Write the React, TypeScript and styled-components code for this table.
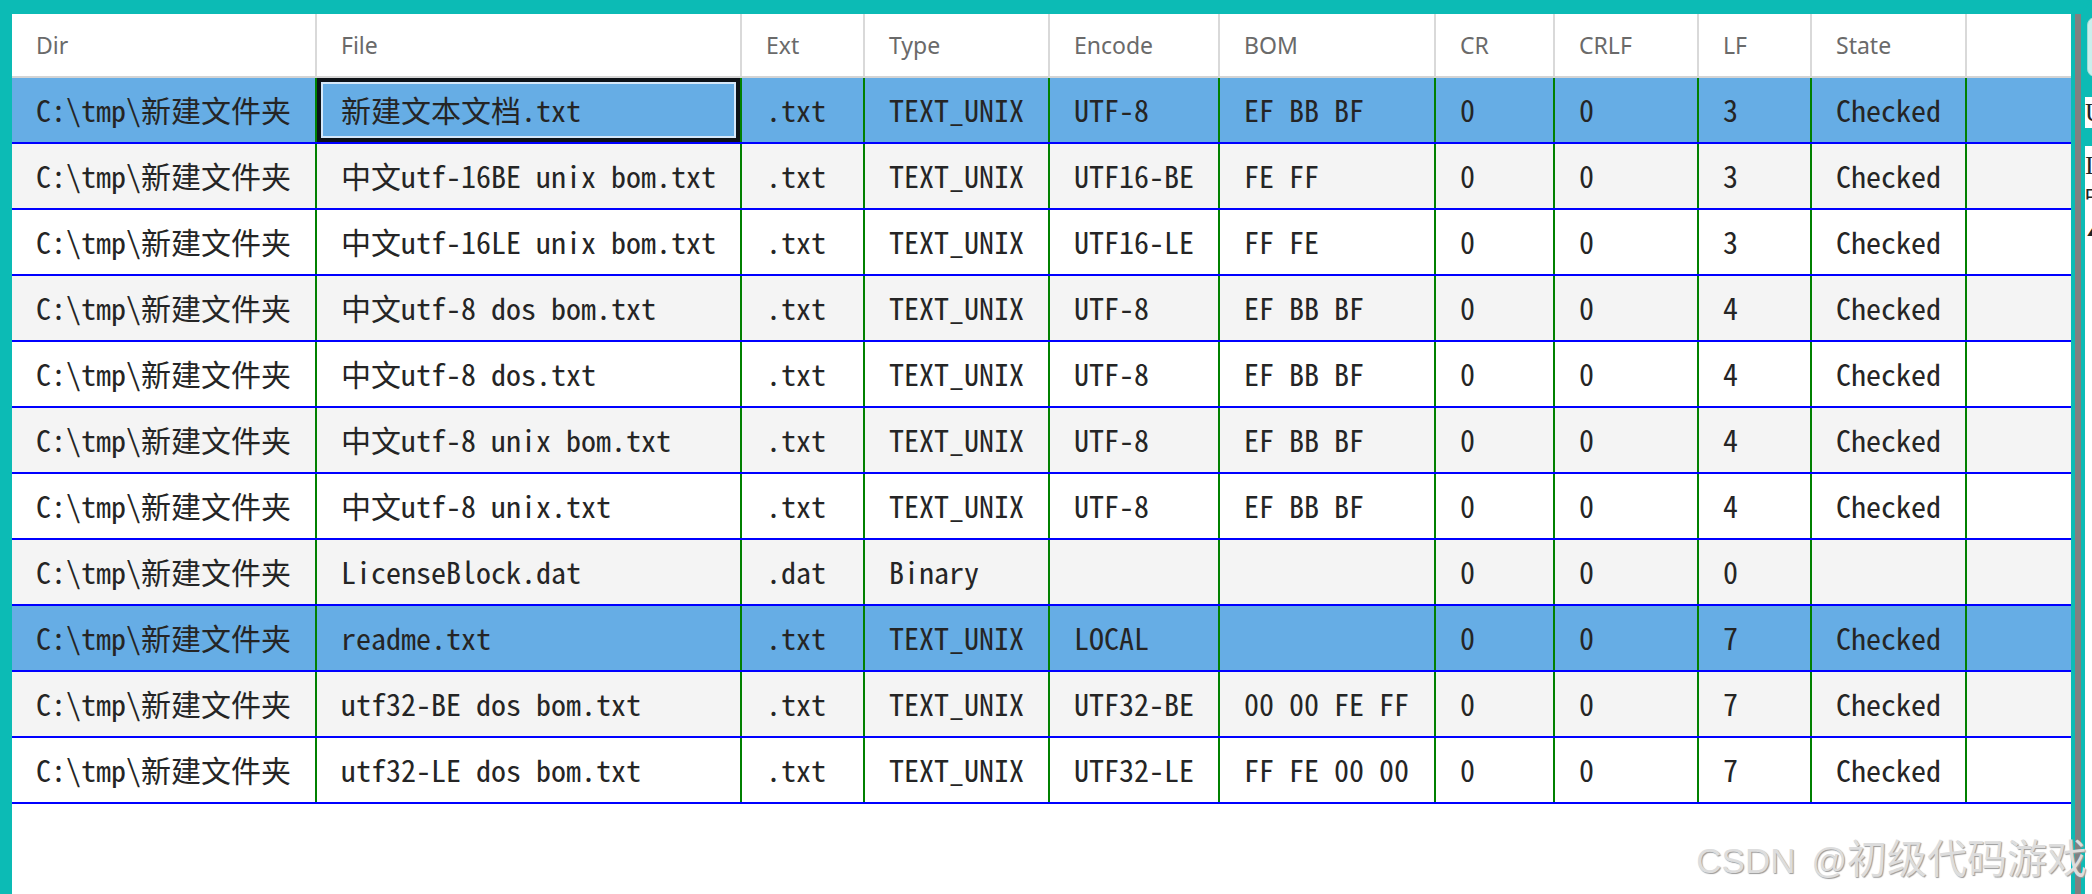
import styled, { createGlobalStyle } from 'styled-components';

const TEAL = '#0cbbb5';
const COLUMNS = '305px 425px 123px 185px 170px 216px 119px 144px 113px 155px 1fr';

const GlobalStyle = createGlobalStyle`
  html, body {
    margin: 0;
    padding: 0;
    background: ${TEAL};
  }
`;

const StyledScreen = styled.div`
  position: relative;
  display: flex;
  width: 2092px;
  height: 894px;
  padding: 14px 0 0 12px;
  box-sizing: border-box;
  background: ${TEAL};
  overflow: hidden;
`;

const StyledGridPanel = styled.div`
  display: flex;
  flex-direction: column;
  flex: none;
  width: 2059px;
  background: #ffffff;
`;

const StyledHeaderRow = styled.div`
  display: grid;
  grid-template-columns: ${COLUMNS};
  height: 64px;
  box-sizing: border-box;
  border-bottom: 2px solid #d4d4d4;
`;

const StyledHeaderCell = styled.div`
  display: flex;
  align-items: center;
  padding-left: 24px;
  border-right: 2px solid #d9d9d9;
  font-family: 'Noto Sans', 'Open Sans', sans-serif;
  font-size: 23px;
  color: #6a6a6a;

  &:last-child {
    border-right: none;
  }
`;

const StyledRow = styled.div<{ $selected: boolean; $alt: boolean }>`
  display: grid;
  grid-template-columns: ${COLUMNS};
  height: 66px;
  box-sizing: border-box;
  border-bottom: 2px solid #0000ff;
  background: ${({ $selected, $alt }) => ($selected ? '#66ade5' : $alt ? '#f4f4f4' : '#ffffff')};
`;

const StyledCell = styled.div<{ $focused?: boolean }>`
  display: flex;
  align-items: center;
  padding-left: 24px;
  padding-bottom: 2px;
  border-right: 2px solid #008000;
  white-space: nowrap;
  overflow: hidden;
  font-family: 'Noto Sans Mono CJK SC', 'Noto Sans CJK SC', 'Liberation Mono', monospace;
  font-size: 30px;
  color: #252525;
  box-shadow: ${({ $focused }) => ($focused ? 'inset 0 0 0 4px #0d1218, inset 0 0 0 6px #d6e9fa' : 'none')};

  &:last-child {
    border-right: none;
  }
`;

const StyledGap = styled.div`
  flex: none;
  width: 4px;
`;

const StyledSplitter = styled.div`
  flex: none;
  width: 6px;
  background: #808080;
`;

const StyledSidePanel = styled.div`
  display: flex;
  flex-direction: column;
  flex: none;
  width: 7px;
  overflow: hidden;
`;

const StyledSideCard = styled.div`
  flex: none;
  height: 58px;
  margin: 3px 0 0 2px;
  width: 40px;
  border: 1px solid #9edcd6;
  border-radius: 8px;
  background: #c8f0ec;
`;

const StyledSideLabel = styled.div<{ $grow?: boolean }>`
  flex: ${({ $grow }) => ($grow ? '1' : 'none')};
  margin-top: ${({ $grow }) => ($grow ? '18px' : '20px')};
  height: ${({ $grow }) => ($grow ? 'auto' : '31px')};
  width: 40px;
  padding-top: ${({ $grow }) => ($grow ? '4px' : '0')};
  background: #ffffff;
  font-family: 'Liberation Serif', serif;
  font-size: 26px;
  line-height: 31px;
  color: #222222;
  white-space: pre;
`;

const StyledWatermark = styled.div`
  position: absolute;
  right: 5px;
  bottom: 16px;
  display: flex;
  align-items: baseline;
  gap: 16px;
  font-family: 'Liberation Sans', 'Noto Sans CJK SC', sans-serif;
  font-size: 35px;
  line-height: 1;
  color: #dddddd;
  text-shadow: 1px 1px 1px #9a9a9a;
`;

const StyledWatermarkCjk = styled.span`
  font-family: 'Noto Sans CJK SC', sans-serif;
  font-size: 40px;
`;

const HEADERS = ['Dir', 'File', 'Ext', 'Type', 'Encode', 'BOM', 'CR', 'CRLF', 'LF', 'State', ''];

type FileRow = {
  file: string;
  ext: string;
  type: string;
  encode: string;
  bom: string;
  cr: string;
  crlf: string;
  lf: string;
  state: string;
  selected?: boolean;
};

const DIR = 'C:\\tmp\\新建文件夹';

const ROWS: FileRow[] = [
  { file: '新建文本文档.txt', ext: '.txt', type: 'TEXT_UNIX', encode: 'UTF-8', bom: 'EF BB BF', cr: '0', crlf: '0', lf: '3', state: 'Checked', selected: true },
  { file: '中文utf-16BE unix bom.txt', ext: '.txt', type: 'TEXT_UNIX', encode: 'UTF16-BE', bom: 'FE FF', cr: '0', crlf: '0', lf: '3', state: 'Checked' },
  { file: '中文utf-16LE unix bom.txt', ext: '.txt', type: 'TEXT_UNIX', encode: 'UTF16-LE', bom: 'FF FE', cr: '0', crlf: '0', lf: '3', state: 'Checked' },
  { file: '中文utf-8 dos bom.txt', ext: '.txt', type: 'TEXT_UNIX', encode: 'UTF-8', bom: 'EF BB BF', cr: '0', crlf: '0', lf: '4', state: 'Checked' },
  { file: '中文utf-8 dos.txt', ext: '.txt', type: 'TEXT_UNIX', encode: 'UTF-8', bom: 'EF BB BF', cr: '0', crlf: '0', lf: '4', state: 'Checked' },
  { file: '中文utf-8 unix bom.txt', ext: '.txt', type: 'TEXT_UNIX', encode: 'UTF-8', bom: 'EF BB BF', cr: '0', crlf: '0', lf: '4', state: 'Checked' },
  { file: '中文utf-8 unix.txt', ext: '.txt', type: 'TEXT_UNIX', encode: 'UTF-8', bom: 'EF BB BF', cr: '0', crlf: '0', lf: '4', state: 'Checked' },
  { file: 'LicenseBlock.dat', ext: '.dat', type: 'Binary', encode: '', bom: '', cr: '0', crlf: '0', lf: '0', state: '' },
  { file: 'readme.txt', ext: '.txt', type: 'TEXT_UNIX', encode: 'LOCAL', bom: '', cr: '0', crlf: '0', lf: '7', state: 'Checked', selected: true },
  { file: 'utf32-BE dos bom.txt', ext: '.txt', type: 'TEXT_UNIX', encode: 'UTF32-BE', bom: '00 00 FE FF', cr: '0', crlf: '0', lf: '7', state: 'Checked' },
  { file: 'utf32-LE dos bom.txt', ext: '.txt', type: 'TEXT_UNIX', encode: 'UTF32-LE', bom: 'FF FE 00 00', cr: '0', crlf: '0', lf: '7', state: 'Checked' },
];

export default function App() {
  return (
    <>
      <GlobalStyle />
      <StyledScreen>
        <StyledGridPanel>
          <StyledHeaderRow>
            {HEADERS.map((h, i) => (
              <StyledHeaderCell key={i}>{h}</StyledHeaderCell>
            ))}
          </StyledHeaderRow>
          {ROWS.map((row, i) => (
            <StyledRow key={row.file} $selected={!!row.selected} $alt={i % 2 === 1}>
              <StyledCell>{DIR}</StyledCell>
              <StyledCell $focused={i === 0}>{row.file}</StyledCell>
              <StyledCell>{row.ext}</StyledCell>
              <StyledCell>{row.type}</StyledCell>
              <StyledCell>{row.encode}</StyledCell>
              <StyledCell>{row.bom}</StyledCell>
              <StyledCell>{row.cr}</StyledCell>
              <StyledCell>{row.crlf}</StyledCell>
              <StyledCell>{row.lf}</StyledCell>
              <StyledCell>{row.state}</StyledCell>
              <StyledCell />
            </StyledRow>
          ))}
        </StyledGridPanel>
        <StyledGap />
        <StyledSplitter />
        <StyledGap />
        <StyledSidePanel>
          <StyledSideCard />
          <StyledSideLabel>U</StyledSideLabel>
          <StyledSideLabel $grow>{'I\n中\n∠'}</StyledSideLabel>
        </StyledSidePanel>
        <StyledWatermark>
          <span>CSDN</span>
          <span>
            @<StyledWatermarkCjk>初级代码游戏</StyledWatermarkCjk>
          </span>
        </StyledWatermark>
      </StyledScreen>
    </>
  );
}
